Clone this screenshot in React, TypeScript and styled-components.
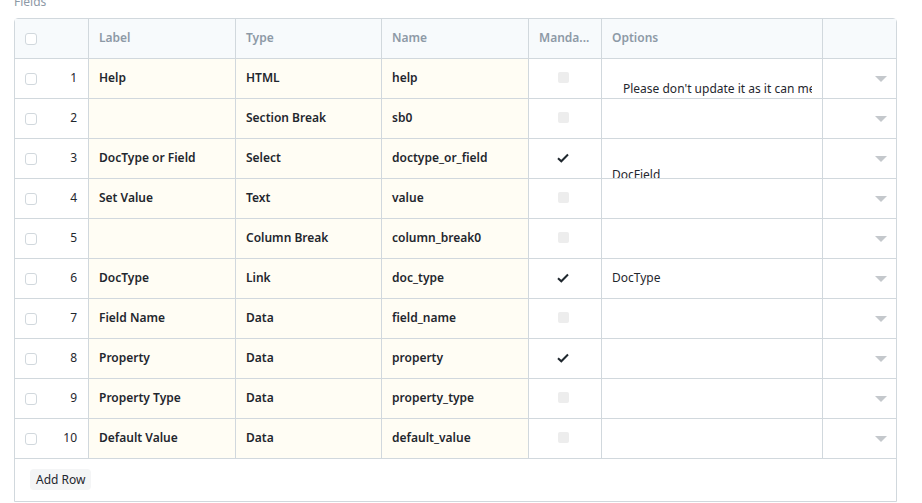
import styled, { createGlobalStyle } from "styled-components";

// Table data.
type Field = {
  label: string;
  type: string;
  name: string;
  mandatory: boolean;
  options: string;
  optionsLayout?: "text" | "low" | "clipped";
};

const FIELDS: Field[] = [
  { label: "Help", type: "HTML", name: "help", mandatory: false, options: "Please don't update it as it can mess up your form. Use the Customize Form View and Custom Fields to set properties!", optionsLayout: "low" },
  { label: "", type: "Section Break", name: "sb0", mandatory: false, options: "" },
  { label: "DocType or Field", type: "Select", name: "doctype_or_field", mandatory: true, options: "DocField", optionsLayout: "clipped" },
  { label: "Set Value", type: "Text", name: "value", mandatory: false, options: "" },
  { label: "", type: "Column Break", name: "column_break0", mandatory: false, options: "" },
  { label: "DocType", type: "Link", name: "doc_type", mandatory: true, options: "DocType" },
  { label: "Field Name", type: "Data", name: "field_name", mandatory: false, options: "" },
  { label: "Property", type: "Data", name: "property", mandatory: true, options: "" },
  { label: "Property Type", type: "Data", name: "property_type", mandatory: false, options: "" },
  { label: "Default Value", type: "Data", name: "default_value", mandatory: false, options: "" },
];

const CheckMark = () => (
  <svg width="12" height="10" viewBox="0 0 12 10">
    <path d="M1 5.2 L4.3 8.3 L11 1.5" fill="none" stroke="#1f272e" strokeWidth="2" />
  </svg>
);

const App = () => {
  return (
    <>
      <GlobalStyle />
      <Page>
        <Caption>Fields</Caption>
        <Grid>
          {/* Header row. */}
          <Row header>
            <IndexCell>
              <RowCheck />
            </IndexCell>
            <HeadCell>Label</HeadCell>
            <HeadCell>Type</HeadCell>
            <HeadCell>Name</HeadCell>
            <HeadCell>Manda...</HeadCell>
            <HeadCell>Options</HeadCell>
            <HeadCell />
          </Row>

          {/* One row for each field. */}
          {FIELDS.map((field, index) => {
            return (
              <Row key={field.name}>
                <IndexCell>
                  <RowCheck />
                  <Index>{index + 1}</Index>
                </IndexCell>
                <StaticCell>{field.label}</StaticCell>
                <StaticCell>{field.type}</StaticCell>
                <StaticCell>{field.name}</StaticCell>
                <CheckCell>{field.mandatory ? <CheckMark /> : <DisabledCheck />}</CheckCell>
                <OptionsCell layout={field.optionsLayout || "text"}>
                  <OptionsText>{field.options}</OptionsText>
                </OptionsCell>
                <CaretCell>
                  <Caret />
                </CaretCell>
              </Row>
            );
          })}

          <Footer>
            <AddButton>Add Row</AddButton>
          </Footer>
        </Grid>
      </Page>
    </>
  );
};

// Styled components.
const GlobalStyle = createGlobalStyle`
  * {
    box-sizing: border-box;
  }

  body {
    background: #ffffff;
    color: #1f272e;
    font-family: "Noto Sans", "Open Sans", sans-serif;
    font-size: 12px;
    margin: 0;
    overflow: hidden;
  }
`;

const Page = styled.div`
  padding: 0 26px 0 14px;
`;

const Caption = styled.div`
  color: #8d99a6;
  font-size: 12px;
  height: 14px;
  line-height: 14px;
  margin-bottom: 9px;
  margin-top: -5px;
`;

const Grid = styled.div`
  border: 1px solid #d1d8dd;
  border-radius: 4px 4px 0 0;
  width: 883px;
`;

const Row = styled.div<{ header?: boolean }>`
  background: ${(props) => (props.header ? "#f7fafc" : "#ffffff")};
  border-bottom: 1px solid #d1d8dd;
  display: grid;
  grid-template-columns: 74px 147px 146px 147px 73px 221px 73px;
  height: 40px;
`;

const Cell = styled.div`
  align-items: center;
  border-right: 1px solid #d1d8dd;
  display: flex;
  overflow: hidden;
  padding: 0 10px 2px;
  white-space: nowrap;

  &:last-child {
    border-right: none;
  }
`;

const HeadCell = styled(Cell)`
  color: #8d99a6;
  font-weight: 600;
`;

const IndexCell = styled(Cell)`
  justify-content: space-between;
  padding: 0 11px 0 10px;
`;

const Index = styled.span`
  color: #1f272e;
  margin-bottom: 2px;
`;

const RowCheck = styled.span`
  background: #ffffff;
  border: 1px solid #d1d8dd;
  border-radius: 3px;
  display: inline-block;
  height: 12px;
  width: 12px;
`;

const StaticCell = styled(Cell)`
  background: #fffdf4;
  color: #1f272e;
  font-weight: 600;
`;

const CheckCell = styled(Cell)`
  justify-content: center;
  padding: 0 12px 2px 8px;
`;

const DisabledCheck = styled.span`
  background: #ededed;
  border-radius: 2px;
  display: inline-block;
  height: 11px;
  width: 11px;
`;

const OptionsCell = styled(Cell)<{ layout: "text" | "low" | "clipped" }>`
  align-items: flex-start;
  line-height: 18px;
  padding: ${(props) =>
    props.layout === "low"
      ? "21px 10px 0 21px"
      : props.layout === "clipped"
      ? "27px 10px 0 10px"
      : "10px 10px 0 10px"};
`;

const OptionsText = styled.span`
  display: block;
  flex: 1;
  min-width: 0;
  overflow: hidden;
`;

const CaretCell = styled(Cell)`
  justify-content: flex-end;
  padding: 0 9px 0 0;
`;

const Caret = styled.span`
  border-left: 6px solid transparent;
  border-right: 6px solid transparent;
  border-top: 6px solid #c4c8cc;
  height: 0;
  width: 0;
`;

const Footer = styled.div`
  align-items: flex-start;
  display: flex;
  height: 42px;
  padding: 10px 15px 0;
`;

const AddButton = styled.button`
  background: #f4f5f6;
  border: none;
  border-radius: 4px;
  color: #1f272e;
  font-family: inherit;
  font-size: 12px;
  height: 21px;
  padding: 0 6px;
`;

export default App;
